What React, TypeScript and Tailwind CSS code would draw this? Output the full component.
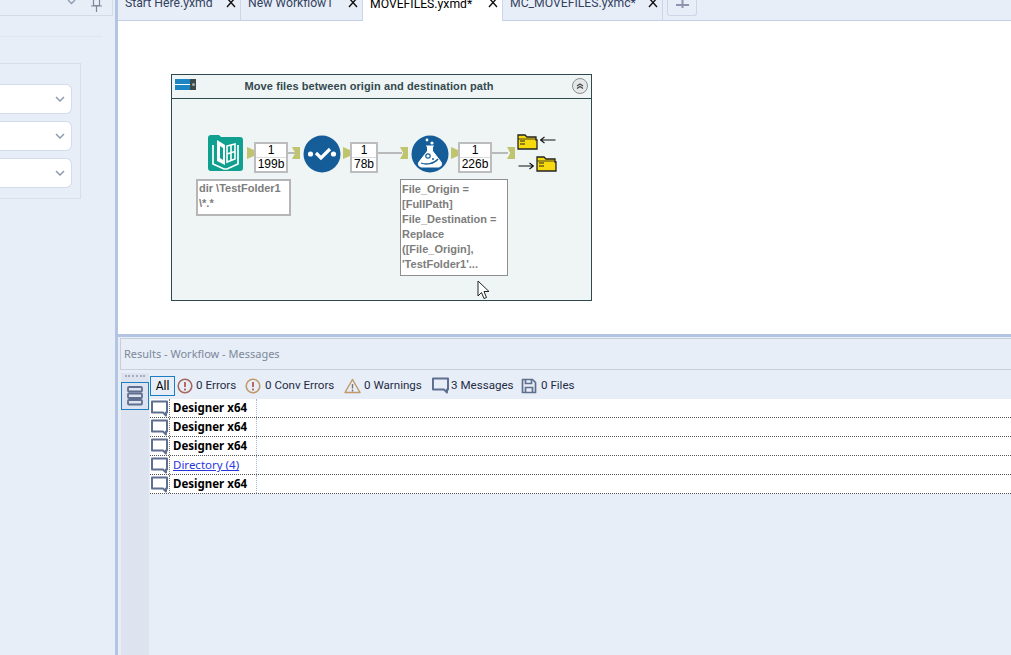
import React from "react";

const ui = "font-['Roboto','Noto_Sans',sans-serif]";

function Chevron() {
  return (
    <svg width="10" height="6" viewBox="0 0 10 6" fill="none" stroke="#8f9bae" strokeWidth="1.5">
      <path d="M1 1l4 4 4-4" />
    </svg>
  );
}

function Tab({ label, active, w, dark }: { label: string; active?: boolean; w: number; dark?: boolean }) {
  return (
    <div
      style={{ width: w }}
      className={`relative flex h-[21px] shrink-0 items-end pl-[7px] pb-[11px] text-[12.200px] leading-none border-r ${
        active ? "bg-white border-[#cdd6e8] text-black" : "bg-[#e8eef8] border-[#cdd6e8] border-b border-b-[#c3cfe6] text-[#33425e]"
      } ${dark ? "text-[#111]" : ""}`}
    >
      <span className="whitespace-nowrap">{label}</span>
      <svg className="absolute right-[4px] top-[0px]" width="10" height="8" viewBox="0 0 10 8" stroke="#111" strokeWidth="1.400">
        <path d="M1 -2l8 9M9 -2l-8 9" />
      </svg>
    </div>
  );
}

function OutAnchor({ className }: { className: string }) {
  return <div className={`absolute h-[12px] w-[8px] bg-[#c0c46e] [clip-path:polygon(0_0,30%_8%,100%_30%,100%_70%,30%_92%,0_100%)] ${className}`} />;
}

function InAnchor({ className }: { className: string }) {
  return <div className={`absolute h-[12px] w-[8px] bg-[#c0c46e] [clip-path:polygon(0_0,100%_0,100%_100%,0_100%,40%_50%)] ${className}`} />;
}

function Badge({ a, b, className }: { a: string; b: string; className: string }) {
  return (
    <div className={`absolute flex h-[31px] flex-col items-center border-2 border-[#bdbdbd] bg-white font-['Liberation_Sans',sans-serif] text-[12px] leading-[13px] text-black ${className}`}>
      <div className="w-full text-center border-b border-[#dcdcdc]">{a}</div>
      <div>{b}</div>
    </div>
  );
}

function Bubble({ color = "#5f6f8f", size = 17 }: { color?: string; size?: number }) {
  return (
    <svg width={size} height={size} viewBox="0 0 17 17" fill="none" stroke={color} strokeWidth="2">
      <path d="M1 1.500h15v11h-1v3l-3-3H1z" strokeLinejoin="round" />
    </svg>
  );
}

function Alert({ color }: { color: string }) {
  return (
    <svg width="16" height="16" viewBox="0 0 16 16" fill="none">
      <circle cx="8" cy="8" r="6.800" stroke={color} strokeWidth="1.600" />
      <path d="M8 4v5M8 10.500v2" stroke="#b0463c" strokeWidth="1.600" />
    </svg>
  );
}

function Folder({ className }: { className: string }) {
  return (
    <svg className={`absolute ${className}`} width="21" height="17" viewBox="0 0 21 17">
      <path d="M1 16V2h7l2 2h9v3h1v9z" fill="#f7d90f" stroke="#222" strokeWidth="1.300" />
      <path d="M1 6h18" stroke="#222" strokeWidth="0.800" />
      <path d="M3 8h5M3 11h5" stroke="#222" strokeWidth="1.200" />
    </svg>
  );
}

function Row({ link }: { link?: boolean }) {
  return (
    <div className="flex h-[19px] bg-white border-b border-dotted border-[#555]">
      <div className="flex h-full w-[20px] items-center pl-[1px] border-r border-dotted border-[#777]">
        <Bubble size={17} />
      </div>
      <div className="flex h-full w-[87px] items-center pl-[3px] border-r border-dotted border-[#a5b6d5]">
        {link ? (
          <span className="font-['Noto_Sans',sans-serif] text-[11.500px] text-[#2a35e0] underline">Directory (4)</span>
        ) : (
          <span className="font-['Noto_Sans',sans-serif] text-[11.500px] font-bold text-black">Designer x64</span>
        )}
      </div>
    </div>
  );
}

function SelectBox() {
  return (
    <div className="flex h-[30px] w-[72px] items-center justify-end rounded-r-[6px] border border-l-0 border-[#d3dcec] bg-white pr-[6px]">
      <Chevron />
    </div>
  );
}

function Canvas() {
  return (
    <div className="relative h-[313px] bg-white">
      <div className="absolute left-[53px] top-[53px] h-[227px] w-[421px] border border-[#2f4a4f] bg-[#eff5f5]">
        <div className="relative flex h-[24px] items-center justify-center border-b border-[#2f4a4f] pr-[25px]">
          <span className="font-['Liberation_Sans',sans-serif] text-[11px] font-bold tracking-[0.1px] text-[#33494f]">
            Move files between origin and destination path
          </span>
          <div className="absolute left-[3px] top-[4px] flex h-[11px] w-[21px]">
            <div className="flex h-full w-[15px] items-center bg-[#1c86c4]">
              <div className="h-px w-full bg-white" />
            </div>
            <div className="flex h-full w-[6px] items-center justify-center bg-[#3c4a4a]">
              <div className="h-[3px] w-[3px] rounded-full bg-[#aaa]" />
            </div>
          </div>
          <div className="absolute right-[3px] top-[3px] flex h-[16px] w-[16px] items-center justify-center rounded-full border border-[#8a8f93] bg-[#e4e8e8]">
            <svg width="8" height="6" viewBox="0 0 8 6" fill="none" stroke="#444" strokeWidth="1.200">
              <path d="M1 3l3-2 3 2M1 5.500l3-2 3 2" />
            </svg>
          </div>
        </div>

        {/* connectors */}
        <svg className="absolute left-0 top-0" width="421" height="227" fill="none" stroke="#a8a8a8" strokeWidth="1.500">
          <path d="M83 78h40M206 78h24M320 78h16" />
        </svg>

        {/* input tool */}
        <svg className="absolute left-[35px] top-[59px]" width="37" height="38" viewBox="0 0 37 38">
          <path d="M1 4c0-2 1-3 3-3h8l2 2h19c2 0 3 1 3 3v28c0 2-1 3-3 3H4c-2 0-3-1-3-3z" fill="#0fa08f" />
          <path d="M6 11v19l11 5h3l11-5V11" fill="none" stroke="#fff" strokeWidth="1.700" />
          <path d="M10 6l8 5v20l-8-4z" fill="#fff" />
          <path d="M13 12l3 2v12l-3-2z" fill="#0fa08f" />
          <path d="M20 12l8-2v15l-8 3zM20 20l8-2.500M24 11v15.500" fill="none" stroke="#fff" strokeWidth="1.600" />
        </svg>
        <OutAnchor className="left-[75px] top-[72px]" />
        <Badge a="1" b="199b" className="left-[82px] top-[67px] w-[34px]" />
        <InAnchor className="left-[120px] top-[72px]" />

        {/* select tool */}
        <svg className="absolute left-[131px] top-[60px]" width="38" height="38" viewBox="0 0 38 38">
          <circle cx="19" cy="19" r="18.500" fill="#145d99" />
          <circle cx="7.500" cy="19" r="2.600" fill="#fff" />
          <circle cx="30.500" cy="19" r="2.600" fill="#fff" />
          <path d="M13 18l5 5 9-9" fill="none" stroke="#fff" strokeWidth="3.200" />
        </svg>
        <OutAnchor className="left-[171px] top-[72px]" />
        <Badge a="1" b="78b" className="left-[178px] top-[67px] w-[28px]" />
        <InAnchor className="left-[228px] top-[72px]" />

        {/* formula tool */}
        <svg className="absolute left-[239px] top-[60px]" width="38" height="38" viewBox="0 0 38 38">
          <circle cx="19" cy="19" r="18.500" fill="#145d99" />
          <circle cx="16" cy="5" r="1.400" fill="#fff" />
          <circle cx="21" cy="8" r="1.600" fill="#fff" />
          <path d="M15 11h8M16.500 11v5L8 27c-1.500 2.500 0 5 3 5h16c3 0 4.500-2.500 3-5l-8.500-11v-5" fill="#fff" stroke="#fff" strokeWidth="1" />
          <circle cx="17" cy="21" r="2.200" fill="none" stroke="#145d99" strokeWidth="1.200" />
          <circle cx="22" cy="24" r="1" fill="#145d99" />
          <path d="M10 28c5 2 13 1 17-4" fill="none" stroke="#145d99" strokeWidth="1.300" />
        </svg>
        <OutAnchor className="left-[279px] top-[72px]" />
        <Badge a="1" b="226b" className="left-[286px] top-[67px] w-[34px]" />
        <InAnchor className="left-[335px] top-[72px]" />

        {/* output folders */}
        <Folder className="left-[345px] top-[58px]" />
        <svg className="absolute left-[368px] top-[60px]" width="16" height="10" viewBox="0 0 16 10" fill="none" stroke="#111" strokeWidth="1.100">
          <path d="M0.500 5h15M4.500 2l-4 3 4 3" />
        </svg>
        <svg className="absolute left-[346px] top-[86px]" width="16" height="10" viewBox="0 0 16 10" fill="none" stroke="#111" strokeWidth="1.100">
          <path d="M0.500 5h15M11.500 2l4 3-4 3" />
        </svg>
        <Folder className="left-[364px] top-[80px]" />

        {/* annotations */}
        <div className="absolute left-[24px] top-[104px] h-[37px] w-[95px] border-2 border-[#b5b5b5] bg-white pl-[1px] font-['Liberation_Sans',sans-serif] text-[11px] font-bold leading-[15px] text-[#7d7d7d]">
          dir \TestFolder1<br />\*.*
        </div>
        <div className="absolute left-[228px] top-[104px] h-[97px] w-[108px] border border-[#8e8e8e] bg-white pl-[1px] pt-[2px] font-['Liberation_Sans',sans-serif] text-[11px] font-bold leading-[15px] text-[#7d7d7d]">
          File_Origin =<br />[FullPath]<br />File_Destination =<br />Replace<br />([File_Origin],<br />'TestFolder1'...
        </div>

        {/* mouse cursor */}
        <svg className="absolute left-[305px] top-[205px]" width="14" height="20" viewBox="0 0 14 20">
          <path d="M1 1v15l3.500-3.500 2.500 6 2.500-1-2.500-6h5z" fill="#fff" stroke="#222" strokeWidth="1" />
        </svg>
      </div>
    </div>
  );
}

function Results() {
  return (
    <div className="flex min-h-0 flex-1 flex-col bg-[#e8eef8] pl-[2px] pt-[1px]">
      <div className="flex h-[32px] shrink-0 items-center border-y border-l border-[#c9cfda] pl-[3px] font-['Noto_Sans',sans-serif] text-[11px] text-[#7b8898]">
        Results - Workflow - Messages
      </div>
      <div className="flex min-h-0 flex-1 pt-[3px]">
        <div className="ml-[1px] flex w-[28px] shrink-0 flex-col bg-[#dde3ef] mr-[1px]">
          <div className="mx-auto mt-[2px] h-[2px] w-[20px] border-t-2 border-dotted border-[#aab]" />
          <div className="mt-[5px] flex h-[28px] w-[28px] items-center justify-center border border-[#1c7fc4]">
            <svg width="16" height="20" viewBox="0 0 16 20" fill="none" stroke="#5f6f8f" strokeWidth="1.800">
              <rect x="1" y="1" width="14" height="4.500" rx="1" />
              <rect x="1" y="7.500" width="14" height="4.500" rx="1" />
              <rect x="1" y="14" width="14" height="4.500" rx="1" />
            </svg>
          </div>
        </div>
        <div className="min-w-0 flex-1">
          <div className="flex h-[26px] items-center text-[11.600px] text-[#1e2c44]">
            <div className="flex h-[20px] w-[25px] items-center justify-center border border-[#1c7fc4] text-[12px] text-black">All</div>
            <div className="ml-[2px] flex w-[68px] items-center gap-[3px]"><Alert color="#a5685f" />0 Errors</div>
            <div className="flex w-[99px] items-center gap-[4px]"><Alert color="#c09a6a" />0 Conv Errors</div>
            <div className="flex w-[88px] items-center gap-[3px]">
              <svg width="17" height="16" viewBox="0 0 17 16" fill="none">
                <path d="M8.500 1.500L16 14.500H1z" stroke="#c09a6a" strokeWidth="1.500" strokeLinejoin="round" />
                <path d="M8.500 6v4.500M8.500 11.500v2" stroke="#777" strokeWidth="1.400" />
              </svg>
              0 Warnings
            </div>
            <div className="flex w-[89px] items-center gap-[2px]"><Bubble />3 Messages</div>
            <div className="flex items-center gap-[4px]">
              <svg width="16" height="16" viewBox="0 0 16 16" fill="none" stroke="#5f6f8f" strokeWidth="1.700">
                <path d="M1.500 1.500h10l3 3v10h-13z" strokeLinejoin="round" />
                <path d="M4.500 1.500v4h6v-4M4.500 14.500v-5h7v5" />
              </svg>
              0 Files
            </div>
          </div>
          <Row />
          <Row />
          <Row />
          <Row link />
          <Row />
        </div>
      </div>
    </div>
  );
}

export default function App() {
  return (
    <div className={`flex h-[655px] w-[1011px] overflow-hidden bg-[#e8eef8] ${ui}`}>
      <aside className="h-full w-[115px] shrink-0 bg-[#e8eef8]">
        <div className="flex h-[16px] w-[113px] items-start justify-end border-b border-r border-[#d5dbe6] pr-[9px]">
          <div className="mr-[14px]">
            <svg width="9" height="6" viewBox="0 0 9 6" fill="none" stroke="#8f9bae" strokeWidth="1.400"><path d="M1 0l3.500 3.500L8 0" /></svg>
          </div>
          <svg width="13" height="12" viewBox="0 0 13 12" fill="none" stroke="#7e8896" strokeWidth="1.200">
            <path d="M3.500 0v5.500h6V0M1 6h11M6.500 6v6" />
          </svg>
        </div>
        <div className="mt-[20px] h-px w-[102px] bg-[#dfe5ee]" />
        <div className="mt-[26px] flex h-[136px] w-[81px] flex-col gap-[7px] border-y border-r border-[#d9dee7] pt-[20px]">
          <SelectBox />
          <SelectBox />
          <SelectBox />
        </div>
      </aside>
      <div className="w-[3px] shrink-0 bg-[#b4c5e4]" />
      <main className="flex min-w-0 flex-1 flex-col">
        <div className="flex h-[21px] shrink-0 border-b border-[#c3cfe6] bg-[#e8eef8]">
          <Tab label="Start Here.yxmd" w={123} dark />
          <Tab label="New Workflow1" w={122} />
          <Tab label="MOVEFILES.yxmd*" w={140} active dark />
          <Tab label="MC_MOVEFILES.yxmc*" w={160} />
          <div className="ml-[4px] flex h-[16px] w-[30px] items-start justify-center rounded-b-[3px] border border-t-0 border-[#cdd6e8]">
            <svg width="13" height="8" viewBox="0 0 13 8" stroke="#8c95ab" strokeWidth="2"><path d="M6.500 0v8M0 5h13" /></svg>
          </div>
        </div>
        <Canvas />
        <div className="h-[3px] shrink-0 bg-[#b4c5e4]" />
        <Results />
      </main>
    </div>
  );
}
